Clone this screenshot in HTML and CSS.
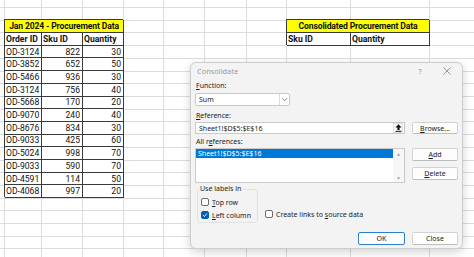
FILE: index.html
```html
<!DOCTYPE html>
<html>
<head>
<meta charset="utf-8">
<link rel="stylesheet" href="styles.css">
</head>
<body>
<div class="sheet">
  <div class="tbl src">
    <div class="c title">Jan 2024 - Procurement Data</div>
    <div class="c hd">Order ID</div><div class="c hd">Sku ID</div><div class="c hd">Quantity</div>
    <div class="c">OD-3124</div><div class="c n">822</div><div class="c n">30</div>
    <div class="c">OD-3852</div><div class="c n">652</div><div class="c n">50</div>
    <div class="c">OD-5466</div><div class="c n">936</div><div class="c n">30</div>
    <div class="c">OD-3124</div><div class="c n">756</div><div class="c n">40</div>
    <div class="c">OD-5668</div><div class="c n">170</div><div class="c n">20</div>
    <div class="c">OD-9070</div><div class="c n">240</div><div class="c n">40</div>
    <div class="c">OD-8676</div><div class="c n">834</div><div class="c n">30</div>
    <div class="c">OD-9033</div><div class="c n">425</div><div class="c n">60</div>
    <div class="c">OD-5024</div><div class="c n">998</div><div class="c n">70</div>
    <div class="c">OD-9033</div><div class="c n">590</div><div class="c n">70</div>
    <div class="c">OD-4591</div><div class="c n">114</div><div class="c n">50</div>
    <div class="c">OD-4068</div><div class="c n">997</div><div class="c n">20</div>
  </div>
  <div class="tbl dst">
    <div class="c title">Consolidated Procurement Data</div>
    <div class="c hd">Sku ID</div><div class="c hd">Quantity</div>
  </div>
</div>

<div class="dialog">
  <div class="titlebar">
    <span class="dtitle">Consolidate</span>
    <span class="help">?</span>
    <span class="xclose"><svg width="8" height="8" viewBox="0 0 8 8"><path d="M0.5 0.5 L7.5 7.5 M7.5 0.5 L0.5 7.5" stroke="#8a8a8a" stroke-width="0.9" fill="none"/></svg></span>
  </div>
  <div class="dbody">
    <div class="lbl lf"><u>F</u>unction:</div>
    <div class="select"><span class="selval">Sum</span><span class="chev"><svg width="7" height="5" viewBox="0 0 7 5"><path d="M1 1.2 L3.5 3.8 L6 1.2" stroke="#606060" stroke-width="0.8" fill="none"/></svg></span></div>
    <div class="lbl lr"><u>R</u>eference:</div>
    <div class="row">
      <div class="input"><span class="val">Sheet1!$D$5:$E$16</span><span class="collapse"><svg width="7" height="8" viewBox="0 0 7 8"><path d="M3.5 0.3 L6.6 3.6 L4.6 3.6 L4.6 6 L2.4 6 L2.4 3.6 L0.4 3.6 Z" fill="#111"/><rect x="0.6" y="6.8" width="5.8" height="1" fill="#111"/></svg></span></div>
      <div class="btn"><u>B</u>rowse...</div>
    </div>
    <div class="lbl la">All r<u>e</u>ferences:</div>
    <div class="row">
      <div class="list">
        <div class="items"><div class="selitem">Sheet1!$D$5:$E$16</div></div>
        <div class="scroll"><span class="arr">▲</span><span class="arr">▼</span></div>
      </div>
      <div class="btncol">
        <div class="btn"><u>A</u>dd</div>
        <div class="btn"><u>D</u>elete</div>
      </div>
    </div>
    <div class="optrow">
      <fieldset class="group">
        <legend>Use labels in</legend>
        <div class="chk"><span class="box"></span><span><u>T</u>op row</span></div>
        <div class="chk"><span class="box on"><svg width="6" height="6" viewBox="0 0 6 6"><path d="M1 3.1 L2.4 4.5 L5 1.5" stroke="#fff" stroke-width="0.9" fill="none"/></svg></span><span><u>L</u>eft column</span></div>
      </fieldset>
      <div class="chk links"><span class="box"></span><span>Create links to <u>s</u>ource data</span></div>
    </div>
    <div class="actions">
      <div class="btn ok">OK</div>
      <div class="btn">Close</div>
    </div>
  </div>
</div>
</body>
</html>
```

FILE: styles.css
```css
* { box-sizing: border-box; margin: 0; padding: 0; }
html, body { width: 474px; height: 257px; overflow: hidden; background: #fff; }
body { position: relative; font-family: Roboto, "Liberation Sans", sans-serif; }

.sheet {
  --g: #dcdcdc;
  height: 257px;
  display: grid;
  grid-template-columns: 4px 37px 41px 41px 40px 41px 42px 40px 64px 79px 1fr;
  grid-template-rows: 6.6px repeat(20, 12.71px);
  background:
    linear-gradient(var(--g), var(--g)) 4px 0 / 1px 100% no-repeat,
    linear-gradient(var(--g), var(--g)) 41px 0 / 1px 100% no-repeat,
    linear-gradient(var(--g), var(--g)) 82px 0 / 1px 100% no-repeat,
    linear-gradient(var(--g), var(--g)) 123px 0 / 1px 100% no-repeat,
    linear-gradient(var(--g), var(--g)) 163px 0 / 1px 100% no-repeat,
    linear-gradient(var(--g), var(--g)) 204px 0 / 1px 100% no-repeat,
    linear-gradient(var(--g), var(--g)) 246px 0 / 1px 100% no-repeat,
    linear-gradient(var(--g), var(--g)) 286px 0 / 1px 100% no-repeat,
    linear-gradient(var(--g), var(--g)) 350px 0 / 1px 100% no-repeat,
    linear-gradient(var(--g), var(--g)) 429px 0 / 1px 100% no-repeat,
    repeating-linear-gradient(to bottom, var(--g) 0 1px, transparent 1px 12.71px) 0 6.6px / 100% 100% no-repeat,
    #fff;
}

.tbl {
  display: grid;
  box-shadow: 1px 1px 0 #3a3a3a;
  font-size: 8.6px;
  color: #111;
}
.src { grid-column: 2 / 5; grid-row: 3 / 17; grid-template-columns: 37px 41px 41px; grid-template-rows: repeat(14, 12.71px); }
.dst { grid-column: 9 / 11; grid-row: 3 / 5; grid-template-columns: 64px 79px; grid-template-rows: repeat(2, 12.71px); }
.c {
  box-shadow: inset 1px 1px 0 #3a3a3a;
  background: #fff;
  padding: 1px 1px 0 2px;
  display: flex;
  align-items: center;
  white-space: nowrap;
}
.title { grid-column: 1 / -1; background: #ffff00; justify-content: center; font-weight: 700; letter-spacing: -0.15px; }
.hd { font-weight: 700; }
.n { justify-content: flex-end; padding-right: 2px; }

/* dialog */
.dialog {
  position: absolute;
  left: 190px;
  top: 62px;
  width: 273px;
  height: 187px;
  background: #f3f3f3;
  border: 1px solid #cdcdcd;
  border-radius: 6px;
  box-shadow: 0 3px 10px rgba(0,0,0,0.18);
  font-family: "Noto Sans", "Open Sans", sans-serif;
  font-size: 7px;
  color: #1b1b1b;
}
.titlebar { height: 16px; display: flex; align-items: center; padding-left: 6px; }
.dtitle { flex: 1; color: #9b9b9b; font-size: 7.4px; }
.help { width: 10px; text-align: center; color: #8a8a8a; margin-right: 15px; }
.xclose { width: 14px; display: flex; justify-content: center; margin-right: 8px; }

.dbody { padding: 0 4px; }
.lbl { height: 10px; line-height: 10px; white-space: nowrap; }
.lf { margin: 2px 0 2px 1px; }
.lr { margin: 5px 0 1px 1px; }
.la { margin: 3px 0 1px 1px; }

.select {
  width: 95px; height: 13px;
  background: #fff;
  border: 1px solid #c9c9c9;
  border-radius: 2px;
  display: flex; align-items: center;
  padding-left: 3px;
}
.selval { flex: 1; }
.chev {
  width: 10px; height: 11px;
  border-left: 1px solid #dadada;
  display: flex; align-items: center; justify-content: center;
}

.row { display: flex; gap: 7px; align-items: flex-start; }
.input {
  width: 210px; height: 12px;
  background: #fff;
  border: 1px solid #c9c9c9;
  display: flex; align-items: center;
  padding-left: 3px;
}
.val { flex: 1; }
.collapse {
  width: 10px; height: 10px;
  margin-right: 1px;
  border: 1px solid #e0e0e0;
  background: #fafafa;
  display: flex; align-items: center; justify-content: center;
}

.btn {
  width: 46px; height: 12px;
  background: #fdfdfd;
  border: 1px solid #d2d2d2;
  border-bottom-color: #bdbdbd;
  border-radius: 2px;
  display: flex; align-items: center; justify-content: center;
  white-space: nowrap;
}
.btncol { display: flex; flex-direction: column; gap: 6px; }
.btncol .btn { height: 13px; }

.list {
  width: 210px; height: 35px;
  background: #fff;
  border: 1px solid #c9c9c9;
  display: flex;
}
.items { flex: 1; }
.selitem { height: 9px; line-height: 9px; background: #0078d7; color: #fff; padding-left: 2px; }
.scroll {
  width: 11px;
  background: #f7f7f7;
  display: flex; flex-direction: column; justify-content: space-between; align-items: center;
  padding: 2px 0 1px;
}
.arr { font-size: 5px; color: #a8a8a8; line-height: 6px; }

.optrow { display: flex; align-items: flex-start; margin-top: 1px; gap: 7px; }
.group {
  margin-left: 2px;
  width: 61px; height: 39px;
  border: 1px solid #e2e2e2;
  border-radius: 3px;
  padding: 0 0 0 3px;
  display: flex; flex-direction: column; gap: 3px;
}
.group legend { padding: 0 1px; margin-left: -2px; height: 10px; line-height: 10px; white-space: nowrap; }
.chk { display: flex; align-items: center; gap: 3px; height: 10px; white-space: nowrap; }
.group .chk:first-of-type { margin-top: 3px; }
.box {
  width: 8px; height: 8px;
  border: 1px solid #6b6b6b;
  border-radius: 2px;
  background: #fff;
  display: flex; align-items: center; justify-content: center;
}
.box.on { background: #005fb8; border-color: #005fb8; }
.links { margin-top: 25px; }

.actions { display: flex; justify-content: flex-end; gap: 7px; margin-top: 9px; }
.actions .btn { height: 13px; }
.ok { width: 47px; border: 1px solid #2a7fd0; }
```
